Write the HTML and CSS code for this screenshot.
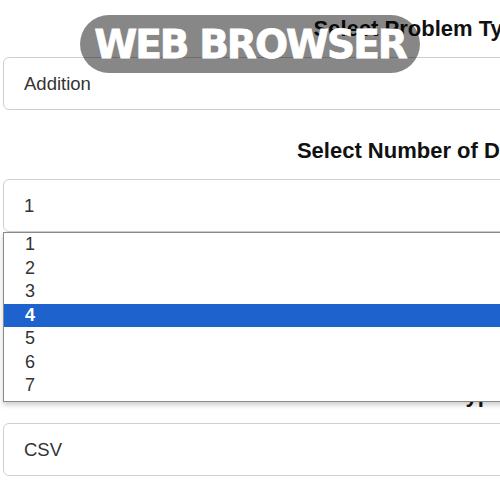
FILE: index.html
```html
<!DOCTYPE html>
<html lang="en">
<head>
  <meta charset="UTF-8" />
  <meta name="viewport" content="width=device-width, initial-scale=1.0"/>
  <title>Math Worksheet Generator</title>
  <link rel="stylesheet" href="styles.css">
</head>
<body>

  <div class="container">
    <div class="field">
      <h2>Select Problem Type</h2>
      <div class="select">Addition</div>
    </div>

    <div class="field">
      <h2>Select Number of Digits</h2>
      <div class="select-wrap">
        <div class="select">1</div>
        <ul class="options">
          <li>1</li>
          <li>2</li>
          <li>3</li>
          <li class="active">4</li>
          <li>5</li>
          <li>6</li>
          <li>7</li>
        </ul>
      </div>
    </div>

    <div class="field">
      <h2>Select Number of Problems</h2>
      <div class="select">10</div>
    </div>

    <div class="field">
      <h2>Select File Type</h2>
      <div class="select">CSV</div>
    </div>
  </div>

  <div class="badge">WEB BROWSER</div>

</body>
</html>
```

FILE: styles.css
```css
* {
  box-sizing: border-box;
  margin: 0;
  padding: 0;
}

html, body {
  width: 500px;
  height: 500px;
  overflow: hidden;
}

body {
  position: relative;
  background: #fff;
  color: #111;
  font-family: 'Liberation Sans', Arial, sans-serif;
}

.container {
  width: 836px;
  margin-left: 3px;
  padding-top: 16px;
  display: flex;
  flex-direction: column;
  gap: 28px;
}

.field h2 {
  font-size: 22px;
  line-height: 26px;
  font-weight: bold;
  text-align: center;
  margin-bottom: 15px;
}

.select {
  height: 53px;
  display: flex;
  align-items: center;
  padding-left: 20px;
  border: 1px solid #cfcfcf;
  border-radius: 6px;
  font-size: 18.5px;
  color: #333;
  background: #fff;
}

.select-wrap {
  position: relative;
}

.options {
  position: absolute;
  top: 100%;
  left: 0;
  right: 0;
  z-index: 2;
  list-style: none;
  padding-bottom: 3px;
  background: #fff;
  border: 1px solid #8a8a8a;
  box-shadow: 0 3px 5px rgba(0, 0, 0, 0.2);
}

.options li {
  height: 23.5px;
  line-height: 23.5px;
  padding-left: 21px;
  font-size: 18px;
  color: #333;
}

.options li.active {
  background: #1e62cd;
  color: #fff;
  font-weight: bold;
}

.badge {
  position: absolute;
  top: 15px;
  left: 80px;
  width: 340px;
  height: 58px;
  border-radius: 29px;
  background: rgba(0, 0, 0, 0.47);
  color: #fff;
  font-family: 'DejaVu Sans', sans-serif;
  font-weight: bold;
  font-size: 39px;
  letter-spacing: -2px;
  -webkit-text-stroke: 0.8px #fff;
  display: flex;
  align-items: center;
  justify-content: center;
  z-index: 5;
}
```
